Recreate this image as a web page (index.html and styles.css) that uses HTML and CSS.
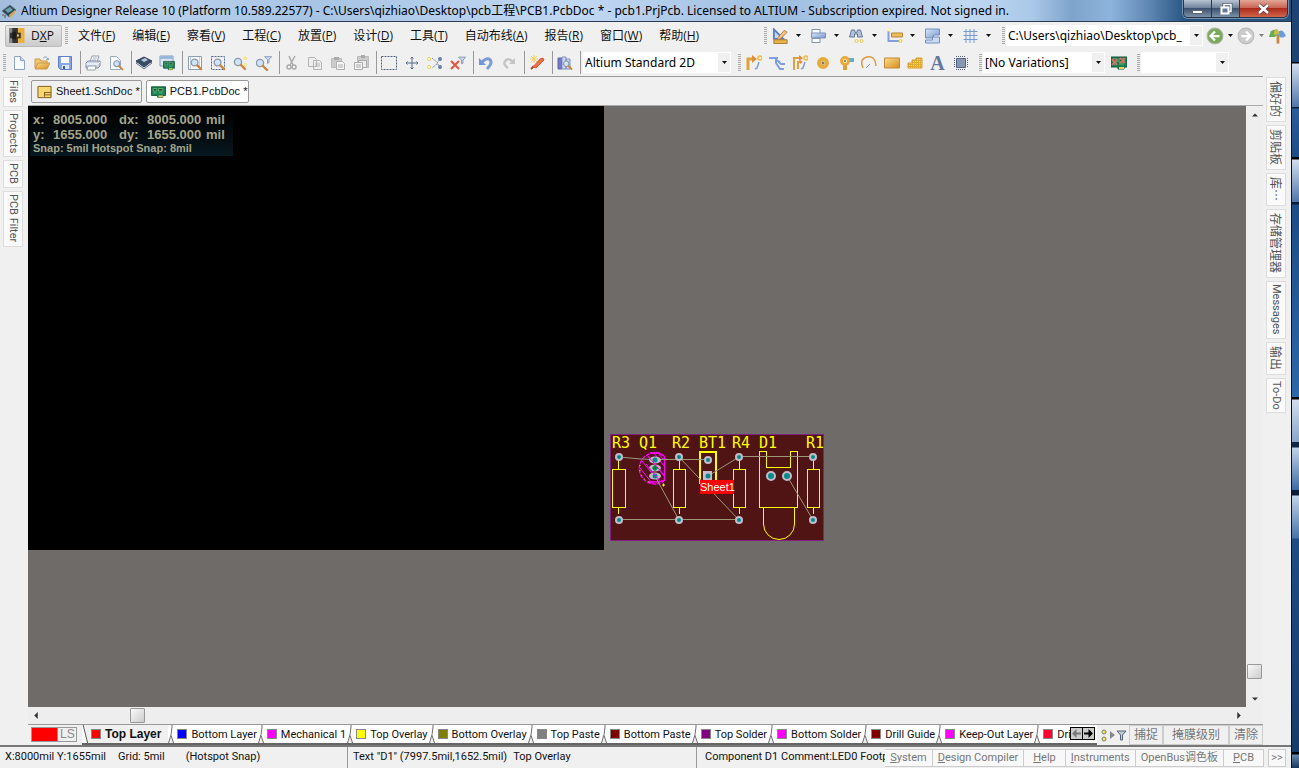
FILE: index.html
```html
<!DOCTYPE html>
<html lang="zh-CN">
<head>
<meta charset="utf-8">
<title>Altium Designer Release 10</title>
<link rel="stylesheet" href="styles.css">
</head>
<body>
<svg class="sprite" aria-hidden="true">
  <defs>
    <linearGradient id="gold" x1="0" y1="0" x2="1" y2="1"><stop offset="0" stop-color="#fbe08a"/><stop offset="1" stop-color="#d88a20"/></linearGradient>
    <linearGradient id="blue" x1="0" y1="0" x2="1" y2="1"><stop offset="0" stop-color="#dbe8fa"/><stop offset="1" stop-color="#7594cc"/></linearGradient>
    <pattern id="mesh" width="2" height="2" patternUnits="userSpaceOnUse"><path d="M0 0h2v2H0z" fill="#e6ac30"/><path d="M0 0h1v1H0z" fill="#fbe4a0"/></pattern>
  </defs>
  <symbol id="lens" viewBox="0 0 16 16"><circle cx="7" cy="7" r="3.6" fill="#cfe4f8" stroke="#8d99ad" stroke-width="1.4"/><path d="M10 10l4 4" stroke="#c98542" stroke-width="2.4" stroke-linecap="round"/></symbol>
  <symbol id="funnel" viewBox="0 0 16 16"><path d="M6 1.5h9.500l-3.500 4v4l-2 1v-5z" fill="#c7d9ee" stroke="#7589a6"/></symbol>
  <symbol id="stars" viewBox="0 0 16 16"><g fill="#fff9ae" stroke="#e3c84e" stroke-width=".7"><circle cx="4" cy="4" r="1.700"/><circle cx="4" cy="12" r="1.700"/></g></symbol>
  <symbol id="app" viewBox="0 0 16 16"><path d="M1 8l8-6 6 5-7 7z" fill="#2c4558" stroke="#607b8f"/><path d="M4 7l5-3 3 3-5 3z" fill="#68a2a5"/><path d="M8 12l6-5v3l-5 5z" fill="#d2aa55"/><path d="M2 11v2m2-1v3" stroke="#565540"/></symbol>
  <symbol id="new" viewBox="0 0 16 16"><path d="M3.500 1.500h6l4 4v9h-10z" fill="#f7faff" stroke="#8ea3c6"/><path d="M9.500 1.500v4h4" fill="#c8d7ed" stroke="#8ea3c6"/></symbol>
  <symbol id="open" viewBox="0 0 16 16"><path d="M1 13V4h5l1 2h6v7z" fill="#f1c974" stroke="#c89a4d"/><path d="M1 14l3-6h12l-3 6z" fill="url(#gold)" stroke="#c89a4d"/><path d="M9 3q4-3 5 2m-2-1l2 1 1-2" fill="none" stroke="#8ea3b8"/></symbol>
  <symbol id="save" viewBox="0 0 16 16"><path d="M1.500 1.500h13v13h-11l-2-2z" fill="#8ba8e6" stroke="#5f7fc8"/><path d="M4 2h8v6H4z" fill="#fff"/><path d="M5 10h7v4H5z" fill="#dfe7f5"/><path d="M6 11h2v3H6z" fill="#345da7"/></symbol>
  <symbol id="print" viewBox="0 0 16 16"><path d="M5 7l2-6h7l-2 6z" fill="#fff" stroke="#929fb2"/><path d="M8 3h4M7 5h4" stroke="#aab4c4"/><path d="M1 8l2-2h12v5l-2 2H1z" fill="#cfd7e6" stroke="#808da3"/><path d="M1 9h12l2-2" fill="none" stroke="#fff"/><path d="M3 11h8l-1 4H2z" fill="#fff" stroke="#929fb2"/></symbol>
  <symbol id="preview" viewBox="0 0 16 16"><path d="M2.500 1.500h6l4 4v9h-10z" fill="#f8fbff" stroke="#9eaabd"/><use href="#lens" x="3" y="3" width="13" height="13"/></symbol>
  <symbol id="stack" viewBox="0 0 16 16"><path d="M0 8l8-4 8 4-8 6z" fill="#d3d9e4" stroke="#68778d"/><path d="M0 6l8-4 8 4-8 6z" fill="#3b4d66" stroke="#31425a"/><path d="M5 5l4-2 3 2-4 2z" fill="#b9c9dd"/></symbol>
  <symbol id="board" viewBox="0 0 16 16"><path d="M0 2h16v10h-3v2H7v-2H0z" fill="#198053" stroke="#125336"/><path d="M2 4h4v3H2zm6 0h5v3H8zM2 9h4m2 0h5" fill="#294b3b" stroke="#62b777"/><path d="M8 12h5v2H8z" fill="#e7d35d"/></symbol>
  <symbol id="window-board" viewBox="0 0 16 16"><path d="M1 1h13v10H1z" fill="#dfe7f2" stroke="#8a9bb3"/><path d="M1 1h13v3H1z" fill="#99b6dd"/><use href="#board" x="4" y="5" width="12" height="11"/></symbol>
  <symbol id="fitdoc" viewBox="0 0 16 16"><path d="M1.500 1.500h13v13h-13z" fill="#fff" stroke="#8c9eb7"/><path d="M3.500 2v12M12.500 2v12" stroke="#c8d2e0"/><use href="#lens" x="1" y="1" width="15" height="15"/></symbol>
  <symbol id="fitarea" viewBox="0 0 16 16"><path d="M1.500 1.500h13v13h-13z" fill="none" stroke="#506b96" stroke-dasharray="2 1"/><use href="#lens" x="1" y="1" width="15" height="15"/></symbol>
  <symbol id="zoomsel" viewBox="0 0 16 16"><use href="#lens" x="-2" y="0" width="16" height="16"/><use href="#stars" x="9" y="0" width="13" height="13"/></symbol>
  <symbol id="zoomfilter" viewBox="0 0 16 16"><use href="#lens" x="-3" y="1" width="16" height="16"/><use href="#funnel" x="4" y="0" width="12" height="13"/></symbol>
  <symbol id="cut" viewBox="0 0 16 16"><path d="M5 1l4 9M11 1L6 10" stroke="#aaa" stroke-width="1.500"/><circle cx="5" cy="12" r="2" fill="none" stroke="#aaa" stroke-width="1.500"/><circle cx="10" cy="12" r="2" fill="none" stroke="#aaa" stroke-width="1.500"/></symbol>
  <symbol id="copy" viewBox="0 0 16 16"><g fill="#eee" stroke="#b5b5b5"><path d="M1.500 2.500h6l2 2v7h-8zM6.500 5.500h6l2 2v7h-8z"/><path d="M8 9h5m-5 2h5"/></g></symbol>
  <symbol id="paste" viewBox="0 0 16 16"><path d="M1.500 3.500h10v9h-10z" fill="#ccc" stroke="#bbb"/><path d="M4 2h5v3H4z" fill="#aaa"/><path d="M6.500 6.500h6l2 2v6h-8zM8 10h5m-5 2h5" fill="#f4f4f4" stroke="#b0b0b0"/></symbol>
  <symbol id="multipaste" viewBox="0 0 16 16"><path d="M4.500 1.500h11v11h-11z" fill="#ccc" stroke="#bbb"/><path d="M8 0h4v3H8z" fill="#aaa"/><path d="M5.500 5.500h8v7h-8z" fill="#eee" stroke="#aaa"/><path d="M1.500 7.500h8v7h-8zM3 10h5m-5 2h5" fill="#f6f6f6" stroke="#aaa"/></symbol>
  <symbol id="marquee" viewBox="0 0 16 16"><path d="M.5 1.500h15v13H.5z" fill="none" stroke="#51627c" stroke-dasharray="2 1"/></symbol>
  <symbol id="move" viewBox="0 0 16 16"><path d="M8 2v12M2 8h12M6.500 3.500L8 2l1.500 1.500M6.500 12.500L8 14l1.500-1.500M3.500 6.500L2 8l1.500 1.500M12.500 6.500L14 8l-1.500 1.500" fill="none" stroke="#586b85"/></symbol>
  <symbol id="deselect" viewBox="0 0 16 16"><use href="#stars" x="-2" y="0" width="16" height="16"/><path d="M5 3l6 5-6 5M13 4l-3 4 3 4" fill="none" stroke="#7185a7" stroke-dasharray="2 1"/><circle cx="13" cy="4" r="2" fill="#667eaa"/><circle cx="13" cy="12" r="2" fill="#667eaa"/></symbol>
  <symbol id="clearfilter" viewBox="0 0 16 16"><use href="#funnel" x="4" y="0" width="12" height="14"/><path d="M1 6l8 8M9 6l-8 8" stroke="#e35643" stroke-width="2"/></symbol>
  <symbol id="undo" viewBox="0 0 16 16"><path d="M1 3v7h7z" fill="#6f93dc"/><path d="M4 7q4-4 7-3 5 3-2 10" fill="none" stroke="#7a9bd9" stroke-width="3"/></symbol>
  <symbol id="redo" viewBox="0 0 16 16"><path d="M14 3v6H8z" fill="#c5c5c5"/><path d="M12 7Q8 3 5 5q-4 4 2 8" fill="none" stroke="#c5c5c5" stroke-width="2.500"/></symbol>
  <symbol id="wand" viewBox="0 0 16 16"><path d="M2 14l3-3" stroke="#b04030" stroke-width="2"/><path d="M4 12l7-8 3-1 1 2-8 8z" fill="#ec7048" stroke="#d8593a"/><path d="M5 0v8M1 4h8M2 1l6 6M8 1L2 7" stroke="#f6d060"/></symbol>
  <symbol id="browse" viewBox="0 0 16 16"><path d="M1 3h4v11H1z" fill="#7777c5" stroke="#6464aa"/><path d="M5 2h4v12H5zM9 4h4v10H9z" fill="#cbd5f6" stroke="#8292bf"/><use href="#lens" x="4" y="3" width="12" height="13"/></symbol>
  <symbol id="route" viewBox="0 0 16 16"><path d="M2 15V4h5" fill="none" stroke="#e0a23c" stroke-width="3"/><path d="M6 0l5 4-5 4z" fill="#dc8f3c"/><path d="M9 14l2-1 2-6" fill="none" stroke="#7f9edb" stroke-width="1.500"/><circle cx="14" cy="3" r="2" fill="#fff0c0" stroke="#edb94c" stroke-width="1.500"/></symbol>
  <symbol id="diffroute" viewBox="0 0 16 16"><path d="M2 15V3h6M6 14V7h3" fill="none" stroke="#e0a23c" stroke-width="2"/><path d="M7 0l4 3-4 3zM8 5l3 2-3 2z" fill="#dc8f3c"/><path d="M9 14l2-1 2-6" fill="none" stroke="#7f9edb" stroke-width="1.500"/><circle cx="14" cy="3" r="2" fill="#fff0c0" stroke="#edb94c" stroke-width="1.500"/></symbol>
  <symbol id="interactive" viewBox="0 0 16 16"><path d="M0 3h9M7 3v5l4 6h4M8 5l4 4h4" fill="none" stroke="#7f9fe0" stroke-width="2"/></symbol>
  <symbol id="pad" viewBox="0 0 16 16"><circle cx="8" cy="8" r="4" fill="#fff0bc" stroke="#e6ab3c" stroke-width="4"/><circle cx="8" cy="8" r="1.500" fill="#857460"/></symbol>
  <symbol id="via" viewBox="0 0 16 16"><path d="M9 3h7v4H9z" fill="#61adc8"/><path d="M5 8h4v7H5z" fill="#dda036"/><circle cx="7" cy="6" r="3.500" fill="#fff0bc" stroke="#e6ab3c" stroke-width="3"/><circle cx="7" cy="6" r="1" fill="#756450"/></symbol>
  <symbol id="arc" viewBox="0 0 16 16"><path d="M2 13Q-2 4 6 2q8-2 9 9" fill="none" stroke="#db9a45" stroke-width="1.500"/><path d="M5 13l4-4" stroke="#7c99c6"/></symbol>
  <symbol id="fill" viewBox="0 0 16 16"><path d="M.5 3h15v10H.5z" fill="url(#gold)" stroke="#c48b38"/></symbol>
  <symbol id="polygon" viewBox="0 0 16 16"><path d="M1 13V8h4V5h4V3h6v10z" fill="url(#mesh)" stroke="#d79b37"/></symbol>
  <symbol id="component" viewBox="0 0 16 16"><path d="M3.500 3.500h9v9h-9z" fill="#8997b5" stroke="#56647f"/><path d="M3 1.500h10M3 14.500h10M1.500 3v10M14.500 3v10" stroke="#56647f" stroke-dasharray="1 1"/></symbol>
  <symbol id="draft" viewBox="0 0 18 16"><path d="M2 1l10 10H2z" fill="#c7d9f4" stroke="#5a80c3" stroke-width="2"/><path d="M2 12h14v4H2z" fill="#e9b449" stroke="#a47832"/><path d="M6 10l7-8 3 2-7 7-4 1z" fill="#f2c37b" stroke="#b87a47"/></symbol>
  <symbol id="align" viewBox="0 0 16 16"><path d="M1.500 1.500h8v5h-8zM1.500 10.500h8v4h-8z" fill="#fff" stroke="#8190a8"/><path d="M1 5h14v5H1z" fill="url(#blue)" stroke="#7894c0"/></symbol>
  <symbol id="find" viewBox="0 0 16 16"><path d="M1 9l2-7h3l1 3h1l1-3h3l2 7h-5V6H6v3z" fill="#b5c2db" stroke="#617795"/><circle cx="8" cy="13" r="1.500" fill="#fffbc0" stroke="#e3c84e"/><circle cx="13" cy="13" r="1.500" fill="#fffbc0" stroke="#e3c84e"/></symbol>
  <symbol id="measure" viewBox="0 0 16 16"><path d="M2 2v11h11" fill="none" stroke="#7fa0dc" stroke-width="2"/><path d="M5 5h11v4H5z" fill="#f0bd58" stroke="#b78439"/><circle cx="2" cy="2" r="1.500" fill="#fff78a"/><circle cx="14" cy="13" r="1.500" fill="#fff78a" stroke="#e3c84e"/></symbol>
  <symbol id="room" viewBox="0 0 16 16"><path d="M1 1h14v6H9v3H1z" fill="url(#blue)" stroke="#7190bf"/><path d="M1 12h7V9h7v6H1z" fill="#c9daf2" stroke="#7190bf"/></symbol>
  <symbol id="grid" viewBox="0 0 16 16"><path d="M3.500 1v14M7.500 1v14M11.500 1v14M1 3.500h14M1 7.500h14M1 11.500h14" stroke="#779bd7"/></symbol>
  <symbol id="back" viewBox="0 0 16 16"><circle cx="8" cy="8" r="7" fill="#79a95b" stroke="#a5b69c"/><path d="M12 8H5m3-4L4 8l4 4" fill="none" stroke="#fff" stroke-width="2"/></symbol>
  <symbol id="forward" viewBox="0 0 16 16"><circle cx="8" cy="8" r="7" fill="#ccc" stroke="#bbb"/><path d="M4 8h7M8 4l4 4-4 4" fill="none" stroke="#fff" stroke-width="2"/></symbol>
  <symbol id="palm" viewBox="0 0 18 16"><path d="M8 4h3v12H8z" fill="#c78a42"/><path d="M9 5Q7-1 2 3L0 9h6l3-2z" fill="#63ac51"/><path d="M8 5q6-7 10 3-6 4-8-1z" fill="#6b9ddd"/><path d="M6 1q4-2 5 5L5 7z" fill="#c9bd4c"/></symbol>
  <symbol id="variant" viewBox="0 0 16 16"><use href="#board" width="16" height="16"/><path d="M1 4l5 6m0-6l-5 6M9 3l5 5m0-5L9 8" stroke="#e66" stroke-width="1.500"/></symbol>
  <symbol id="sheet" viewBox="0 0 16 14"><path d="M1 1h14v12H1z" fill="#fbd76f" stroke="#80571e"/><path d="M8 7.500h7M8 10h7M8 7v5" stroke="#80571e"/></symbol>
  <symbol id="caret" viewBox="0 0 7 4"><path d="M1 0h5L3.500 3z" fill="#111"/></symbol>
  <symbol id="edge" viewBox="0 0 8 20"><path d="M0 0h8v20H0z" fill="#fff"/><path d="M0 20l3-9 3 9z" fill="#eee"/><path d="M0 20l3-10 1-8V0m-1 11l3 9" fill="none" stroke="#666"/></symbol>
</svg>

<div class="screen">
<div class="app">
  <header class="titlebar">
    <svg class="app-icon"><use href="#app"/></svg>
    <h1>Altium Designer Release 10 (Platform 10.589.22577) - C:\Users\qizhiao\Desktop\pcb工程\PCB1.PcbDoc * - pcb1.PrjPcb. Licensed to ALTIUM - Subscription expired. Not signed in.</h1>
    <div class="window-buttons">
      <button aria-label="Minimize"><svg viewBox="0 0 14 14"><path d="M1.500 8.500h10v3h-10z" fill="#fff" stroke="#5b6370"/></svg></button>
      <button aria-label="Restore"><svg viewBox="0 0 14 14"><path d="M5 2.500h7v7H5z" fill="none" stroke="#4d5868" stroke-width="3"/><path d="M5 2.500h7v7H5z" fill="none" stroke="#fff" stroke-width="1.500"/><path d="M2.500 5.500h7v6h-7z" fill="#667a94" stroke="#fff" stroke-width="2"/></svg></button>
      <button class="close" aria-label="Close"><svg viewBox="0 0 14 14"><path d="M2 3l9 8M11 3l-9 8" stroke="#5e3940" stroke-width="4"/><path d="M2 3l9 8M11 3l-9 8" stroke="#fff" stroke-width="2.500"/></svg></button>
    </div>
  </header>

  <nav class="menubar">
    <button class="dxp"><svg viewBox="0 0 16 16"><path d="M0 0h9v16H0z" fill="#333"/><path d="M9 0h7v16H9z" fill="#e9b040"/><path d="M0 0h3v5H0zM0 11h3v5H0z" fill="#8d8a84"/><path d="M3 4h4v8H3z" fill="#1c1c1c"/><path d="M7 5h5v6H7z" fill="#3b3120"/><path d="M8 7h2v2H8z" fill="#f4d27c"/></svg>D<u>X</u>P</button>
    <i class="grip"></i>
    <div class="menus">
      <button>文件(<u>F</u>)</button><button>编辑(<u>E</u>)</button><button>察看(<u>V</u>)</button><button>工程(<u>C</u>)</button><button>放置(<u>P</u>)</button><button>设计(<u>D</u>)</button><button>工具(<u>T</u>)</button><button>自动布线(<u>A</u>)</button><button>报告(<u>R</u>)</button><button>窗口(<u>W</u>)</button><button>帮助(<u>H</u>)</button>
    </div>
    <div class="utilities">
      <i class="grip"></i>
      <button class="drop" aria-label="Utility tools"><svg><use href="#draft"/></svg><svg class="caret"><use href="#caret"/></svg></button>
      <button class="drop" aria-label="Align"><svg><use href="#align"/></svg><svg class="caret"><use href="#caret"/></svg></button>
      <button class="drop" aria-label="Find"><svg><use href="#find"/></svg><svg class="caret"><use href="#caret"/></svg></button>
      <button class="drop" aria-label="Dimensions"><svg><use href="#measure"/></svg><svg class="caret"><use href="#caret"/></svg></button>
      <button class="drop" aria-label="Rooms"><svg><use href="#room"/></svg><svg class="caret"><use href="#caret"/></svg></button>
      <button class="drop" aria-label="Grids"><svg><use href="#grid"/></svg><svg class="caret"><use href="#caret"/></svg></button>
      <i class="grip"></i>
      <span class="combo path"><select aria-label="Location"><option>C:\Users\qizhiao\Desktop\pcb_</option></select><svg class="caret"><use href="#caret"/></svg></span>
      <button class="nav" aria-label="Back"><svg><use href="#back"/></svg><svg class="caret"><use href="#caret"/></svg></button>
      <button class="nav off" aria-label="Forward"><svg><use href="#forward"/></svg><svg class="caret"><use href="#caret"/></svg></button>
      <button class="home" aria-label="Home"><svg><use href="#palm"/></svg></button>
    </div>
  </nav>

  <div class="toolbar">
    <i class="grip"></i>
    <button aria-label="New"><svg><use href="#new"/></svg></button><button aria-label="Open"><svg><use href="#open"/></svg></button><button aria-label="Save"><svg><use href="#save"/></svg></button><i class="sep"></i>
    <button aria-label="Print"><svg><use href="#print"/></svg></button><button aria-label="Preview"><svg><use href="#preview"/></svg></button><i class="sep"></i>
    <button aria-label="Devices"><svg><use href="#stack"/></svg></button><button aria-label="Board view"><svg><use href="#window-board"/></svg></button><i class="sep"></i>
    <button aria-label="Fit document"><svg><use href="#fitdoc"/></svg></button><button aria-label="Zoom area"><svg><use href="#fitarea"/></svg></button><button aria-label="Zoom selected"><svg><use href="#zoomsel"/></svg></button><button aria-label="Zoom filtered"><svg><use href="#zoomfilter"/></svg></button><i class="sep"></i>
    <button aria-label="Cut"><svg><use href="#cut"/></svg></button><button aria-label="Copy"><svg><use href="#copy"/></svg></button><button aria-label="Paste"><svg><use href="#paste"/></svg></button><button aria-label="Rubber stamp"><svg><use href="#multipaste"/></svg></button><i class="sep"></i>
    <button aria-label="Select area"><svg><use href="#marquee"/></svg></button><button aria-label="Move"><svg><use href="#move"/></svg></button><button aria-label="Deselect"><svg><use href="#deselect"/></svg></button><button aria-label="Clear filter"><svg><use href="#clearfilter"/></svg></button><i class="sep"></i>
    <button aria-label="Undo"><svg><use href="#undo"/></svg></button><button aria-label="Redo"><svg><use href="#redo"/></svg></button><i class="sep"></i>
    <button aria-label="Cross probe"><svg><use href="#wand"/></svg></button><i class="sep"></i>
    <button aria-label="Browse components"><svg><use href="#browse"/></svg></button><i class="sep"></i>
    <span class="combo view"><select aria-label="View configuration"><option>Altium Standard 2D</option></select><svg class="caret"><use href="#caret"/></svg></span>
    <i class="grip"></i>
    <button aria-label="Interactive routing"><svg><use href="#route"/></svg></button><button aria-label="Multi-routing"><svg><use href="#interactive"/></svg></button><button aria-label="Differential routing"><svg><use href="#diffroute"/></svg></button><button aria-label="Pad"><svg><use href="#pad"/></svg></button><button aria-label="Via"><svg><use href="#via"/></svg></button><button aria-label="Arc"><svg><use href="#arc"/></svg></button><button aria-label="Fill"><svg><use href="#fill"/></svg></button><button aria-label="Polygon"><svg><use href="#polygon"/></svg></button><button class="string">A</button><button aria-label="Component"><svg><use href="#component"/></svg></button>
    <i class="grip"></i>
    <span class="combo variations"><select aria-label="Variations"><option>[No Variations]</option></select><svg class="caret"><use href="#caret"/></svg></span>
    <button aria-label="Variant"><svg><use href="#variant"/></svg></button>
    <i class="grip"></i>
    <span class="combo blank"><select aria-label="Filter"><option></option></select><svg class="caret"><use href="#caret"/></svg></span>
  </div>

  <main class="main">
    <aside class="side left"><button>Files</button><button>Projects</button><button>PCB</button><button>PCB Filter</button></aside>
    <section class="center">
      <div class="doc-tabs"><button><svg><use href="#sheet"/></svg>Sheet1.SchDoc *</button><button class="current"><svg><use href="#board"/></svg>PCB1.PcbDoc *</button></div>
      <div class="work">
        <div class="canvas">
          <div class="page"></div>
          <div class="hud">
            <div class="coords"><span>x:</span><span>8005.000</span><span>dx:</span><span>8005.000</span><span>mil</span><span>y:</span><span>1655.000</span><span>dy:</span><span>1655.000</span><span>mil</span></div>
            <div>Snap: 5mil Hotspot Snap: 8mil</div>
          </div>
          <svg class="pcb" viewBox="0 0 214 107">
            <path d="M.5 .5h213v106H.5z" fill="#501414" stroke="#802080"/>
            <g fill="none" stroke="#ff0" shape-rendering="crispEdges">
              <path d="M2.500 35.500h13v38h-13zM8.500 23v12M8.500 74v6M63.500 35.500h12v38h-12zM69.500 23v12M69.500 74v6M123.500 35.500h12v38h-12zM129.500 23v12M129.500 74v6M197.500 35.500h12v38h-12zM203.500 23v12M203.500 74v6"/>
              <path d="M90 18h16v31H90z" stroke-width="2"/>
              <path d="M149.500 17.500h7v16h24v-16h7v56h-38zM153.500 74v16M184.500 74v16"/>
            </g>
            <path d="M153.500 90a15.500 15.500 0 0 0 31 0" fill="none" stroke="#ff0"/>
            <g fill="none" stroke="#f0f"><path d="M54.500 22v25M40 19h9l5 3M38 48h11l5-2" stroke-width="1.300"/><path d="M54 22a15.500 15.500 0 1 0 0 25" stroke-dasharray="4 1" stroke-width="1.300"/><path d="M32 27l17 21M37 21l17 21M43 18l11 14M30 34l12 15M48 19l6 7"/></g>
            <path d="M30 31a15.500 15.500 0 0 0 12 18" fill="none" stroke="#ff0" stroke-dasharray="1 4"/>
            <g stroke="#9b9878" fill="none"><path d="M9 23l22 2 14 .500h53M9 85.500h120M69 23l60 63M98 42l31-19M129 22.500h74M177 42l26 44M45 42l24 44"/></g>
            <g fill="#008b8b" stroke="#c4bcc8" stroke-width="2"><circle cx="9" cy="23" r="3"/><circle cx="9" cy="86" r="3"/><circle cx="69" cy="23" r="3"/><circle cx="69" cy="86" r="3"/><circle cx="129" cy="23" r="3"/><circle cx="129" cy="86" r="3"/><circle cx="203" cy="23" r="3"/><circle cx="203" cy="86" r="3"/><circle cx="161" cy="42" r="4"/><circle cx="177" cy="42" r="4"/><circle cx="98" cy="26" r="3"/></g>
            <path d="M93 37h9v9h-9z" fill="#c4bcc8"/><circle cx="98" cy="42" r="2.500" fill="#008b8b"/>
            <g fill="#c4bcc8"><ellipse cx="45" cy="26" rx="6" ry="3.500"/><ellipse cx="45" cy="34" rx="6" ry="3.500"/><ellipse cx="45" cy="42" rx="6" ry="3.500"/></g>
            <g fill="#008b8b"><circle cx="45" cy="26" r="2.500"/><circle cx="45" cy="34" r="2.500"/><circle cx="45" cy="42" r="2.500"/></g>
            <path d="M38 22l16 19M36 30l14 17" stroke="#f0f"/><path d="M42 34h6m-3-3v6" stroke="#080"/><path d="M52 51h3m-1.500-1.500v3" stroke="#ff0"/>
            <g class="designators"><text x="2" y="14">R3</text><text x="29" y="14">Q1</text><text x="62" y="14">R2</text><text x="89" y="14">BT1</text><text x="122" y="14">R4</text><text x="149" y="14">D1</text><text x="196" y="14">R1</text></g>
            <path d="M90 46h34v14H90z" fill="#f00"/><text class="sheet-label" x="90" y="57">Sheet1</text>
          </svg>
        </div>
        <div class="vscroll"><svg viewBox="0 0 8 4"><path d="M0 4h8L4 0z"/></svg><i class="space"></i><button class="thumb" aria-label="Vertical position"></button><svg class="down" viewBox="0 0 8 4"><path d="M0 0h8L4 4z"/></svg></div>
      </div>
      <div class="hscroll"><svg viewBox="0 0 4 8"><path d="M4 0v8L0 4z"/></svg><button class="thumb" aria-label="Horizontal position"></button><i class="space"></i><svg viewBox="0 0 4 8"><path d="M0 0v8l4-4z"/></svg></div>
      <div class="layers">
        <button class="ls"><i></i>LS</button>
        <div class="layer-tabs">
          <svg class="first" viewBox="0 0 8 20"><path d="M0 0l5 20h3V0z" fill="#f0f0f0"/><path d="M1 0l5 20" stroke="#555"/></svg>
          <button class="current"><i class="red"></i>Top Layer</button><svg><use href="#edge"/></svg>
          <button><i class="navy"></i>Bottom Layer</button><svg><use href="#edge"/></svg>
          <button><i class="magenta"></i>Mechanical 1</button><svg><use href="#edge"/></svg>
          <button><i class="yellow"></i>Top Overlay</button><svg><use href="#edge"/></svg>
          <button><i class="olive"></i>Bottom Overlay</button><svg><use href="#edge"/></svg>
          <button><i class="gray"></i>Top Paste</button><svg><use href="#edge"/></svg>
          <button><i class="maroon"></i>Bottom Paste</button><svg><use href="#edge"/></svg>
          <button><i class="purple"></i>Top Solder</button><svg><use href="#edge"/></svg>
          <button><i class="magenta"></i>Bottom Solder</button><svg><use href="#edge"/></svg>
          <button><i class="maroon"></i>Drill Guide</button><svg><use href="#edge"/></svg>
          <button><i class="magenta"></i>Keep-Out Layer</button><svg><use href="#edge"/></svg>
          <button><i class="crimson"></i>Drill Dr</button>
          <div class="tab-scroll"><button aria-label="Previous layers"><svg viewBox="0 0 10 10"><path d="M5 1v3h4v2H5v3L1 5z" fill="#777"/></svg></button><button aria-label="Next layers"><svg viewBox="0 0 10 10"><path d="M5 1v3H1v2h4v3l4-4z"/></svg></button></div>
        </div>
        <button class="mask" aria-label="Mask"><svg viewBox="0 0 28 16"><g fill="#ffee45" stroke="#777"><circle cx="4" cy="5" r="2"/><circle cx="4" cy="12" r="2"/></g><path d="M10 4l5 4-5 4z" fill="#888"/><path d="M17 4h9l-3.500 4v5h-2V8z" fill="#bdcbd2" stroke="#567"/></svg></button>
        <button class="tool">捕捉</button><button class="tool wide">掩膜级别</button><button class="tool">清除</button>
      </div>
    </section>
    <aside class="side right"><button class="cjk">偏好的</button><button class="cjk">剪贴板</button><button class="cjk">库…</button><button class="cjk">存储管理器</button><button>Messages</button><button class="cjk">输出</button><button>To-Do</button></aside>
  </main>

  <footer class="status">
    <div class="position"><span>X:8000mil Y:1655mil</span><span>Grid: 5mil</span><span>(Hotspot Snap)</span></div>
    <div class="object"><span>Text "D1" (7997.5mil,1652.5mil)</span><span>Top Overlay</span></div>
    <div class="part">Component D1 Comment:LED0 Footp</div>
    <div class="panels"><button><u>S</u>ystem</button><button><u>D</u>esign Compiler</button><button class="short"><u>H</u>elp</button><button><u>I</u>nstruments</button><button>OpenBus调色板</button><button class="short"><u>P</u>CB</button></div>
    <button class="more">&gt;&gt;</button>
  </footer>
</div>
<div class="desktop"></div>
</div>
</body>
</html>
```
FILE: styles.css
```css
* { box-sizing: border-box; }
body {
  margin: 0;
  font: 11px/13px "Liberation Sans", "Noto Sans CJK SC", sans-serif;
  color: #111;
}
button { margin: 0; padding: 0; border: 0; background: none; font: inherit; color: inherit; white-space: nowrap; }
svg { flex: none; display: block; }
.sprite { position: absolute; width: 0; height: 0; }
.screen { display: flex; height: 100vh; overflow: hidden; }
.app { flex: 1; min-width: 0; display: flex; flex-direction: column; background: #f0f0f0; }
.desktop {
  width: 8px;
  border-left: 1px solid #061224;
  background: linear-gradient(#1d4474 0 62px, #000 62px 63px, #d2dded 64px, #4f76aa 107px, #0b1c38 107px 108px, #2c5e9c 109px, #1d4c86 157px, #000 157px 159px, #d2dded 160px, #4f76aa 202px, #0b1c38 202px 204px, #1d4c86 205px, #2c68aa 397px, #000 397px 399px, #d2dded 400px, #89a5c9 442px, #102645 442px 447px, #c1d2e8 448px, #3e6ba3 490px, #0b1c38 490px 495px, #c1d2e8 496px, #4874aa 538px, #1d4c86 539px, #173c6b 752px, #000 752px 754px, #6787ac 755px, #16365f);
}

.titlebar {
  height: 22px;
  display: flex;
  align-items: center;
  padding-left: 1px;
  border-bottom: 1px solid #2c3c50;
  background:
    radial-gradient(ellipse at 40% 100%, #c88f9e99, transparent 30px),
    radial-gradient(ellipse at 58% 100%, #c88f9e99, transparent 30px),
    radial-gradient(ellipse at 77% 100%, #c88f9e99, transparent 26px),
    linear-gradient(90deg, #a4bddd, #bdd3ee 10%, #a7c4e5 24%, #c1d8f3 45%, #9dbde1 60%, #c0d8f1 75%, #aac8e9 80%, #7fa3cb 83%, #8db4dc 86%, #5f87b3 89%, #24527f 92%, #27517f);
}
.app-icon { width: 16px; height: 16px; }
h1 { flex: 1; min-width: 0; margin: 0 0 0 4px; font: 12px/18px "Noto Sans", "Noto Sans CJK SC", sans-serif; color: #000; white-space: nowrap; overflow: hidden; }
.window-buttons { align-self: flex-start; display: flex; height: 18px; margin-right: 3px; border: 1px solid #283548; border-top: 0; border-radius: 0 0 5px 5px; overflow: hidden; box-shadow: 0 0 0 1px #b5c7dc88; }
.window-buttons button { width: 28px; display: grid; place-items: center; background: linear-gradient(#b9c4d2, #71849d 45%, #3d526e 50%, #7c91a8); border-right: 1px solid #2c384b; }
.window-buttons .close { width: 47px; border: 0; background: linear-gradient(#e2a597, #c96753 45%, #ad2c1b 50%, #d0664c); }
.window-buttons svg { width: 14px; height: 14px; }

.menubar, .toolbar { display: flex; align-items: center; height: 27px; }
.menubar { padding-left: 5px; font: 12px/18px "Open Sans", "Noto Sans CJK SC", sans-serif; }
.dxp { display: flex; align-items: center; width: 57px; height: 22px; padding-left: 3px; border: 1px solid #bbb; border-radius: 2px; background: linear-gradient(#e8e8e8, #ccc); }
.dxp svg { width: 16px; height: 15px; margin-right: 6px; }
.grip { flex: none; width: 3px; height: 18px; background: repeating-linear-gradient(#aaa 0 1px, #f0f0f0 1px 2px); }
.menubar > .grip { margin-left: 3px; }
.menus { display: flex; gap: 17px; margin-left: 10px; }
.utilities { display: flex; align-items: center; margin-left: auto; padding-right: 5px; }
.utilities svg { width: 17px; height: 16px; }
.drop { display: flex; align-items: center; justify-content: center; gap: 6px; width: 38px; }
.utilities .grip { margin-right: 1px; }
.drop + .grip { margin-left: 6px; }
.utilities svg.caret { width: 7px; height: 4px; }
.nav { display: flex; align-items: center; gap: 3px; width: 31px; padding-left: 3px; }
.utilities .nav svg:first-child { width: 18px; height: 18px; }
.off .caret { opacity: .5; }
.home { margin-left: 4px; }
.combo { position: relative; display: block; flex: none; height: 21px; }
.combo select { appearance: none; width: 100%; height: 21px; padding: 0 14px 0 2px; border: 0; border-radius: 0; background: #fff; color: #000; font: 12px/20px "Noto Sans", "Noto Sans CJK SC", sans-serif; }
.combo svg.caret { position: absolute; right: 1px; top: 1px; width: 12px; height: 19px; padding: 8px 2px 7px 3px; background: #f0f0f0; pointer-events: none; }
.path { width: 197px; }

.toolbar { padding-left: 3px; }
.toolbar > button { flex: none; display: grid; place-items: center; width: 23px; height: 23px; }
.toolbar > button svg { width: 16px; height: 16px; }
.toolbar .grip { margin-right: 1px; }
.toolbar * + .grip { margin: 0 1px 0 7px; }
.sep { flex: none; width: 5px; height: 23px; border-right: 1px solid #999; }
.view { width: 148px; margin-left: 2px; }
.variations { width: 122px; margin-right: 2px; }
.blank { width: 88px; }
.toolbar .string { font: bold 20px/22px "Liberation Serif", serif; color: #6377a0; }

.main { flex: 1; min-height: 0; display: flex; }
.side { flex: none; width: 28px; display: flex; flex-direction: column; gap: 3px; padding: 1px 5px 0 3px; }
.side button { writing-mode: vertical-rl; text-orientation: sideways; width: 20px; padding: 2px 0 3px; line-height: 18px; font-family: Roboto, sans-serif; color: #555; border: 1px solid #ddd; background: #fafafa; text-align: left; }
.side .cjk { padding: 3px 0 4px; font-family: "Noto Sans CJK SC", sans-serif; font-size: 12px; }
.center { flex: 1; min-width: 0; display: flex; flex-direction: column; }
.doc-tabs { display: flex; gap: 4px; height: 30px; padding: 3px 3px 0; border-top: 1px solid #999; border-bottom: 1px solid #aaa; }
.doc-tabs button { display: flex; align-items: center; gap: 4px; height: 23px; padding: 0 1px 0 5px; border: 1px solid #999; border-radius: 2px; background: #f0f0f0; }
.doc-tabs .current { background: #fff; padding-left: 4px; }
.doc-tabs svg { width: 15px; height: 14px; }
.work { flex: 1; min-height: 0; display: flex; }
.canvas { position: relative; flex: 1; overflow: hidden; background: #6f6b69; }
.page { position: absolute; left: 0; top: 0; width: 576px; height: 444px; background: #000; }
.hud { position: absolute; left: 2px; top: 5px; width: 203px; height: 45px; padding: 1px 3px; font-weight: bold; color: #a3a58b; background: linear-gradient(#000, #07171f); }
.coords { display: grid; grid-template-columns: 20px 66px 28px 59px auto; font-size: 13px; line-height: 15px; }
.pcb { position: absolute; left: 582px; top: 328px; width: 214px; height: 107px; }
.designators { font: 15px "DejaVu Sans Mono", monospace; fill: #ff0; }
.sheet-label { font: 11px "Liberation Sans", sans-serif; fill: #fff; }
.vscroll { width: 17px; display: flex; flex-direction: column; align-items: center; padding: 7px 0 6px; background: #eee; }
.vscroll svg { width: 6px; height: 4px; fill: #333; }
.hscroll svg { width: 4px; height: 7px; fill: #333; }
.space { flex: 1; }
.thumb { width: 15px; height: 15px; border: 1px solid #999; border-radius: 1px; background: linear-gradient(135deg, #fafafa, #ccc); }
.vscroll .down { margin-top: 18px; }
.hscroll { height: 17px; display: flex; align-items: center; padding: 0 22px 0 6px; background: #eee; }
.hscroll .thumb { margin-left: 92px; }
.layers { height: 21px; display: flex; border-top: 1px solid #999; padding-left: 3px; }
.ls { display: flex; width: 46px; height: 15px; margin: 2px 5px 0 0; border: 1px solid #999; color: #888; font-size: 12px; }
.ls i { width: 26px; height: 13px; margin-right: 2px; background: #f00; border-right: 1px solid #999; }
.layer-tabs { position: relative; flex: 1; min-width: 0; display: flex; overflow: hidden; background: #fff; border-bottom: 2px solid #656565; font-family: Roboto, sans-serif; }
.layer-tabs > svg { width: 8px; height: 19px; }
.layer-tabs > button { flex: none; display: flex; align-items: center; gap: 4px; padding: 0 1px; }
.layer-tabs > .current { font: bold 12px/13px "Liberation Sans", sans-serif; background: #f0f0f0; padding-right: 7px; }
.layer-tabs i { width: 10px; height: 10px; border: 1px solid #888; }
.red { background: #f00; } .navy { background: #00f; } .magenta { background: #f0f; } .yellow { background: #ff0; }
.olive { background: #808000; } .gray { background: #808080; } .maroon { background: #800000; } .purple { background: #800080; } .crimson { background: #ff0030; }
.tab-scroll { position: absolute; right: 2px; top: 2px; display: flex; border: 1px solid #000; background: #000; gap: 1px; }
.tab-scroll button { width: 11px; height: 11px; background: #ccc; }
.tab-scroll svg { width: 11px; height: 11px; }
.mask { width: 32px; }
.mask svg { width: 28px; height: 16px; margin-left: 3px; }
.tool { height: 20px; padding: 0 4px; border: 1px solid #ccc; color: #777; font-size: 12px; line-height: 18px; }
.tool.wide { padding: 0 8px; }

.status { height: 23px; display: flex; border-top: 2px solid #777; font-family: Roboto, "Noto Sans CJK SC", sans-serif; line-height: 20px; }
.status > div { flex: none; white-space: nowrap; }
.position { width: 348px; padding-left: 5px; border-right: 1px solid #999; }
.position span { margin-right: 12px; }
.position span + span { margin-right: 21px; }
.object { width: 349px; padding-left: 5px; border-right: 1px solid #999; }
.object span { margin-right: 6px; }
.status .part { flex: 1; min-width: 0; padding-left: 8px; overflow: hidden; }
.panels { display: flex; padding-top: 2px; }
.panels button { height: 18px; padding: 0 5px; border: 1px solid #ccc; border-left-width: 0; background: #f8f8f8; color: #777; line-height: 16px; }
.panels .short { padding: 0 9px; }
.more { width: 18px; height: 18px; margin: 2px 5px 0 4px; border: 1px solid #ccc; background: #f8f8f8; color: #777; line-height: 16px; }
```
